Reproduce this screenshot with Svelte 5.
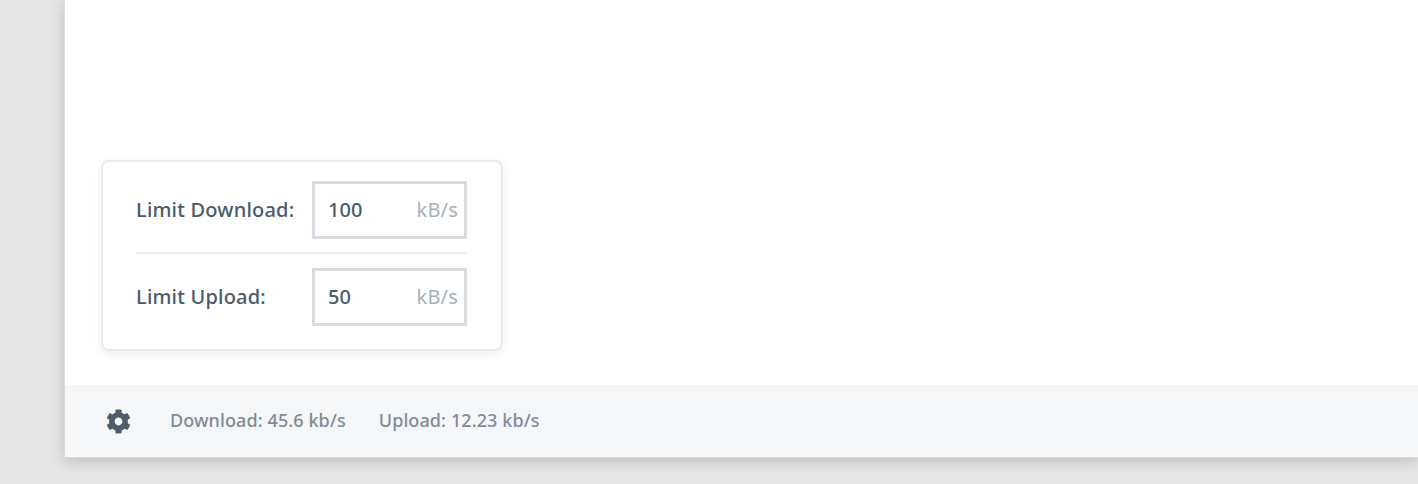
<script>
  let limits = [
    { label: 'Limit Download:', value: '100' },
    { label: 'Limit Upload:', value: '50' }
  ];
</script>

<div class="page">
  <div class="window">
    <main class="content">
      <div class="card">
        {#each limits as limit, i}
          <div class="row" class:first={i === 0}>
            <span class="label">{limit.label}</span>
            <div class="field">
              <span class="value">{limit.value}</span>
              <span class="unit">kB/s</span>
            </div>
          </div>
        {/each}
      </div>
    </main>
    <footer class="status">
      <svg class="gear" viewBox="0 0 512 512" aria-hidden="true">
        <path d="M487.4 315.7l-42.6-24.6c4.3-23.2 4.3-47 0-70.2l42.6-24.6c4.9-2.8 7.1-8.6 5.5-14-11.1-35.6-30-67.8-54.7-94.6-3.8-4.1-10-5.1-14.8-2.3L380.8 110c-17.9-15.4-38.5-27.3-60.8-35.1V25.8c0-5.6-3.9-10.5-9.4-11.7-36.7-8.2-74.3-7.8-109.2 0-5.5 1.2-9.4 6.1-9.4 11.7V75c-22.2 7.9-42.8 19.8-60.8 35.1L88.7 85.5c-4.9-2.8-11-1.9-14.8 2.3-24.7 26.7-43.6 58.9-54.7 94.6-1.7 5.4.6 11.2 5.5 14L67.3 221c-4.3 23.2-4.3 47 0 70.2l-42.6 24.6c-4.9 2.8-7.1 8.6-5.5 14 11.1 35.6 30 67.8 54.7 94.6 3.8 4.1 10 5.1 14.8 2.3l42.6-24.6c17.9 15.4 38.5 27.3 60.8 35.1v49.2c0 5.6 3.9 10.5 9.4 11.7 36.7 8.2 74.3 7.8 109.2 0 5.5-1.2 9.4-6.1 9.4-11.7v-49.2c22.2-7.9 42.8-19.8 60.8-35.1l42.6 24.6c4.9 2.8 11 1.9 14.8-2.3 24.7-26.7 43.6-58.9 54.7-94.6 1.5-5.5-.7-11.3-5.6-14.1zM256 336c-44.1 0-80-35.9-80-80s35.9-80 80-80 80 35.9 80 80-35.9 80-80 80z"/>
      </svg>
      <span class="stat">Download: 45.6 kb/s</span>
      <span class="stat">Upload: 12.23 kb/s</span>
    </footer>
  </div>
</div>

<style>
  :global(body) {
    background: #e5e5e5;
  }

  .page {
    height: 484px;
    padding-left: 65px;
    box-sizing: border-box;
    overflow: hidden;
  }

  .window {
    display: flex;
    flex-direction: column;
    height: 457px;
    background: #fff;
    box-shadow: 0 0 0 1px #dadada, 0 3px 14px rgba(0, 0, 0, 0.2);
    font-family: "Noto Sans", sans-serif;
  }

  .content {
    flex: 1;
    padding: 160px 0 0 36px;
  }

  .card {
    box-sizing: border-box;
    width: 402px;
    height: 191px;
    padding: 19px 34px 0 33px;
    background: #fff;
    border: 2px solid #e9eaec;
    border-radius: 8px;
    box-shadow: 0 3px 10px rgba(0, 0, 0, 0.07);
  }

  .row {
    display: flex;
    align-items: center;
    justify-content: space-between;
    height: 58px;
  }

  .row.first {
    padding-bottom: 13px;
    margin-bottom: 14px;
    border-bottom: 2px solid #ebedef;
  }

  .label {
    padding-bottom: 2px;
    color: #4a5b6c;
    font-size: 20px;
    font-weight: 500;
    letter-spacing: 0.2px;
  }

  .field {
    box-sizing: border-box;
    display: flex;
    align-items: center;
    justify-content: space-between;
    width: 155px;
    height: 58px;
    padding: 0 6px 2px 13px;
    border: 3px solid #d8dce1;
  }

  .value {
    color: #4a5b6c;
    font-size: 20px;
    font-weight: 500;
  }

  .unit {
    color: #a6b0b9;
    font-size: 20px;
    letter-spacing: 0.2px;
  }

  .status {
    display: flex;
    align-items: center;
    height: 72px;
    padding-left: 41px;
    background: #f5f6f8;
  }

  .gear {
    width: 25px;
    height: 25px;
    margin-right: 39px;
    fill: #4e5d6c;
  }

  .stat {
    margin-right: 33px;
    padding-bottom: 2px;
    color: #808b96;
    font-size: 18px;
    font-weight: 500;
    letter-spacing: 0.1px;
  }
</style>
